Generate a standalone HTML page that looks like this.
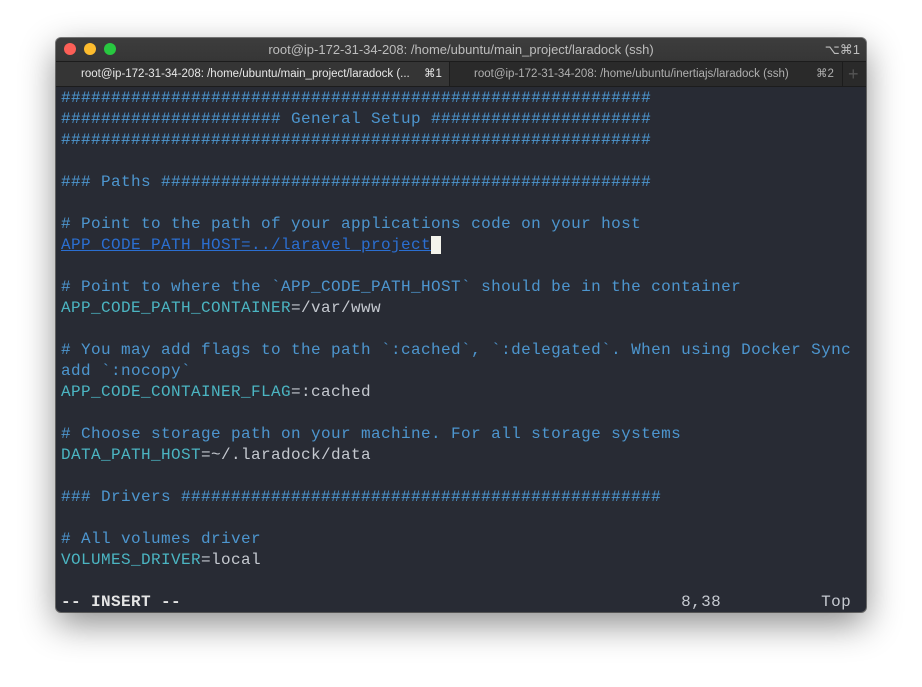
<!DOCTYPE html>
<html><head><meta charset="utf-8"><style>
body{margin:0;width:922px;height:687px;background:#fff;position:relative;overflow:hidden;font-family:"Liberation Sans",sans-serif}
.win{position:absolute;left:56px;top:38px;width:810px;height:574px;background:#282b34;border-radius:5px;box-shadow:0 12px 35px rgba(0,0,0,.45),0 0 0 1px rgba(0,0,0,.5);overflow:hidden}
.title{position:absolute;left:0;top:0;width:810px;height:23px;background:linear-gradient(#3d3d3d,#363636);color:#bdbdbd;font-size:13px;text-align:center;line-height:23px}
.dot{position:absolute;top:5px;width:12px;height:12px;border-radius:50%}
.tabs{position:absolute;left:0;top:23px;width:810px;height:24px;background:#2a2a2a;border-top:1px solid #1c1c1c;border-bottom:1px solid #1c1c1c;font-size:11.5px;color:#bdbdbd;line-height:24px}
.tab1{position:absolute;left:0;top:0;width:393px;height:24px;background:#353535;color:#e8e8e8;border-right:1px solid #1c1c1c}
.tab2{position:absolute;left:394px;top:0;width:392px;height:24px;color:#b0b0b0;border-right:1px solid #1c1c1c}
.term{position:absolute;left:5px;top:50px;font-family:"Liberation Mono",monospace;font-size:16px;letter-spacing:0.4px;line-height:21px;white-space:pre;color:#c5c9d0}
.c{color:#4d96cf}.k{color:#4bb5c2}.l{color:#2b6fd1;text-decoration:underline}
.cur{background:#f4f4ec;color:#282b34}
.b{font-weight:bold;color:#e4e4e4}
</style></head><body>
<div class="win">
<div class="title">
<div class="dot" style="left:8px;background:#fc5f57"></div>
<div class="dot" style="left:28px;background:#fdbc2e"></div>
<div class="dot" style="left:48px;background:#28c840"></div>
root@ip-172-31-34-208: /home/ubuntu/main_project/laradock (ssh)
<span style="position:absolute;right:6px;top:0">⌥⌘1</span>
</div>
<div class="tabs">
<div class="tab1"><span style="position:absolute;left:25px">root@ip-172-31-34-208: /home/ubuntu/main_project/laradock (...</span><span style="position:absolute;left:368px">⌘1</span></div>
<div class="tab2"><span style="position:absolute;left:24px">root@ip-172-31-34-208: /home/ubuntu/inertiajs/laradock (ssh)</span><span style="position:absolute;left:366px">⌘2</span></div>
<span style="position:absolute;left:792px;color:#555;font-size:18px">+</span>
</div>
<div class="term"><span class="c">###########################################################
###################### General Setup ######################
###########################################################

### Paths #################################################

# Point to the path of your applications code on your host</span>
<span class="l">APP_CODE_PATH_HOST=../laravel_project</span><span class="cur"> </span>

<span class="c"># Point to where the `APP_CODE_PATH_HOST` should be in the container</span>
<span class="k">APP_CODE_PATH_CONTAINER</span>=/var/www

<span class="c"># You may add flags to the path `:cached`, `:delegated`. When using Docker Sync
add `:nocopy`</span>
<span class="k">APP_CODE_CONTAINER_FLAG</span>=:cached

<span class="c"># Choose storage path on your machine. For all storage systems</span>
<span class="k">DATA_PATH_HOST</span>=~/.laradock/data

<span class="c">### Drivers ################################################

# All volumes driver</span>
<span class="k">VOLUMES_DRIVER</span>=local

<span class="b">-- INSERT --</span>                                                  8,38          Top</div>
</div>
</body></html>
